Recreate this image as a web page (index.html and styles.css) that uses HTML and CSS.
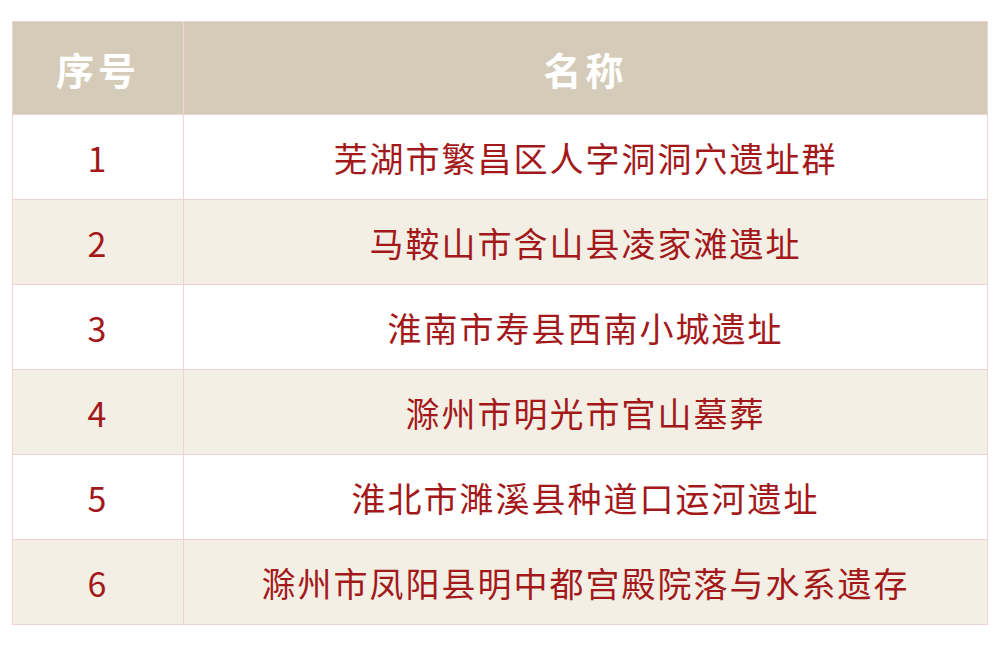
FILE: index.html
```html
<!DOCTYPE html>
<html lang="zh">
<head>
<meta charset="utf-8">
<link rel="stylesheet" href="styles.css">
</head>
<body>
<table class="list">
  <thead>
    <tr><th class="c-no">序号</th><th class="c-name">名称</th></tr>
  </thead>
  <tbody>
    <tr><td>1</td><td>芜湖市繁昌区人字洞洞穴遗址群</td></tr>
    <tr class="alt"><td>2</td><td>马鞍山市含山县凌家滩遗址</td></tr>
    <tr><td>3</td><td>淮南市寿县西南小城遗址</td></tr>
    <tr class="alt"><td>4</td><td>滁州市明光市官山墓葬</td></tr>
    <tr><td>5</td><td>淮北市濉溪县种道口运河遗址</td></tr>
    <tr class="alt"><td>6</td><td>滁州市凤阳县明中都宫殿院落与水系遗存</td></tr>
  </tbody>
</table>
</body>
</html>
```
FILE: styles.css
```css
html, body {
  margin: 0;
  padding: 0;
  background: #ffffff;
}
body {
  padding: 21px 12px 0 12px;
  font-family: "Noto Sans CJK SC", "Noto Sans", sans-serif;
}
.list {
  width: 976px;
  border-collapse: collapse;
  table-layout: fixed;
}
.list th, .list td {
  border: 1px solid #efd4d2;
  text-align: center;
  padding: 0;
}
.list th {
  background: #d4ccb9;
  color: #ffffff;
  font-weight: 700;
  font-size: 38px;
  letter-spacing: 4px;
  height: 92px;
}
.c-no { width: 170px; }
.list td {
  color: #a3191b;
  font-size: 34px;
  letter-spacing: 2px;
  height: 84px;
}
.list tr.alt td {
  background: #f4efe5;
}
```
